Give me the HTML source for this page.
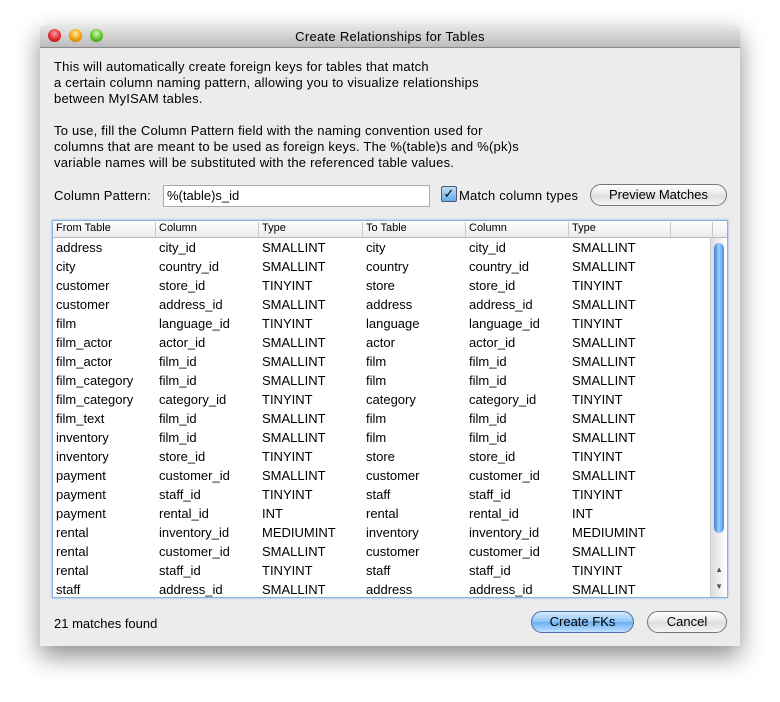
<html><head><style>
body{margin:0;width:780px;height:702px;background:#fff;font-family:"Liberation Sans",sans-serif;font-size:13px;color:#000;position:relative;overflow:hidden}
.win{position:absolute;left:40px;top:25px;width:700px;height:621px;background:#ececec;box-shadow:0 10px 25px rgba(0,0,0,.45);border-radius:5px 5px 0 0;overflow:hidden}
.tb{height:22px;background:linear-gradient(#e8e8e8,#bcbcbc);border-bottom:1px solid #8a8a8a;text-align:center;line-height:23px;font-size:13px;letter-spacing:.3px}
.dot{position:absolute;top:4px;width:13px;height:13px;border-radius:50%}
.t{position:absolute;white-space:nowrap}
.btn{position:absolute;height:20px;border:1px solid #777;border-radius:11px;background:linear-gradient(#fff,#e6e6e6 50%,#ddd 51%,#f4f4f4);text-align:center;line-height:20px;font-size:13px}
.tbl{position:absolute;left:12px;top:195px;width:674px;height:376px;border:1px solid #8ab2e0;box-shadow:0 0 2px #7aa7e0;background:#fff;overflow:hidden}
.hd{position:absolute;left:0;top:0;width:100%;height:16px;background:linear-gradient(#fff,#ebebeb);border-bottom:1px solid #bbb;font-size:11px}
.hd span{position:absolute;top:1px;height:15px;border-right:1px solid #c8c8c8;padding-left:3px}
.r{position:absolute;left:0;height:19px;line-height:19px}
.r span{position:absolute;left:0}
</style></head><body>
<div class="win">
<div class="tb">Create Relationships for Tables</div>
<div class="dot" style="left:8px;background:radial-gradient(circle at 50% 35%,#f9a,#d22 60%,#911)"></div>
<div class="dot" style="left:29px;background:radial-gradient(circle at 50% 35%,#fe9,#e90 60%,#a60)"></div>
<div class="dot" style="left:50px;background:radial-gradient(circle at 50% 35%,#cfa,#5b2 60%,#373)"></div>
<div class="t" style="left:14px;top:34px;line-height:16px;letter-spacing:.22px">This will automatically create foreign keys for tables that match<br>a certain column naming pattern, allowing you to visualize relationships<br>between MyISAM tables.<br><br>To use, fill the Column Pattern field with the naming convention used for<br>columns that are meant to be used as foreign keys. The %(table)s and %(pk)s<br>variable names will be substituted with the referenced table values.</div>
<div class="t" style="left:14px;top:163px;letter-spacing:.2px">Column Pattern:</div>
<div class="t" style="left:123px;top:160px;width:262px;height:20px;background:#fff;border:1px solid #aaa;line-height:20px;padding-left:3px">%(table)s_id</div>
<div class="t" style="left:401px;top:161px;width:14px;height:14px;border:1px solid #557;border-radius:2px;background:linear-gradient(#bde,#6ae);font-size:13px;line-height:14px;text-align:center">✓</div>
<div class="t" style="left:419px;top:163px;letter-spacing:.2px">Match column types</div>
<div class="btn" style="left:550px;top:159px;width:135px">Preview Matches</div>
<div class="tbl">
<div class="hd"><span style="left:0;width:99px">From Table</span><span style="left:103px;width:99px">Column</span><span style="left:206px;width:100px">Type</span><span style="left:310px;width:99px">To Table</span><span style="left:413px;width:99px">Column</span><span style="left:516px;width:98px">Type</span><span style="left:618px;width:38px"></span></div>
<div id="rows"></div>
<div style="position:absolute;right:0;top:17px;width:16px;height:359px;background:linear-gradient(90deg,#ddd,#fff);border-left:1px solid #ccc"></div>
<div style="position:absolute;right:3px;top:22px;width:10px;height:290px;border-radius:6px;background:linear-gradient(90deg,#3a7fd0,#9cd0ff 50%,#4a90e0)"></div>
<div style="position:absolute;right:4px;top:344px;font-size:8px;color:#555">▲</div>
<div style="position:absolute;right:4px;top:361px;font-size:8px;color:#555">▼</div>
</div>
<div class="t" style="left:14px;top:591px">21 matches found</div>
<div class="btn" style="left:491px;top:586px;width:101px;border-color:#4a6fa8;background:linear-gradient(#d7ebff,#8ec3f5 50%,#6aaef0 51%,#bfe0ff)">Create FKs</div>
<div class="btn" style="left:607px;top:586px;width:78px">Cancel</div>
</div>
<script>
var d=[["address","city_id","SMALLINT","city"],["city","country_id","SMALLINT","country"],["customer","store_id","TINYINT","store"],["customer","address_id","SMALLINT","address"],["film","language_id","TINYINT","language"],["film_actor","actor_id","SMALLINT","actor"],["film_actor","film_id","SMALLINT","film"],["film_category","film_id","SMALLINT","film"],["film_category","category_id","TINYINT","category"],["film_text","film_id","SMALLINT","film"],["inventory","film_id","SMALLINT","film"],["inventory","store_id","TINYINT","store"],["payment","customer_id","SMALLINT","customer"],["payment","staff_id","TINYINT","staff"],["payment","rental_id","INT","rental"],["rental","inventory_id","MEDIUMINT","inventory"],["rental","customer_id","SMALLINT","customer"],["rental","staff_id","TINYINT","staff"],["staff","address_id","SMALLINT","address"]];
var x=[3,106,209,313,416,519],h="";
d.forEach(function(r,i){var c=[r[0],r[1],r[2],r[3],r[1],r[2]];h+='<div class="r" style="top:'+(17+i*19)+'px">';c.forEach(function(v,j){h+='<span style="left:'+x[j]+'px">'+v+'</span>'});h+='</div>'});
document.getElementById("rows").innerHTML=h;
</script>
</body></html>
